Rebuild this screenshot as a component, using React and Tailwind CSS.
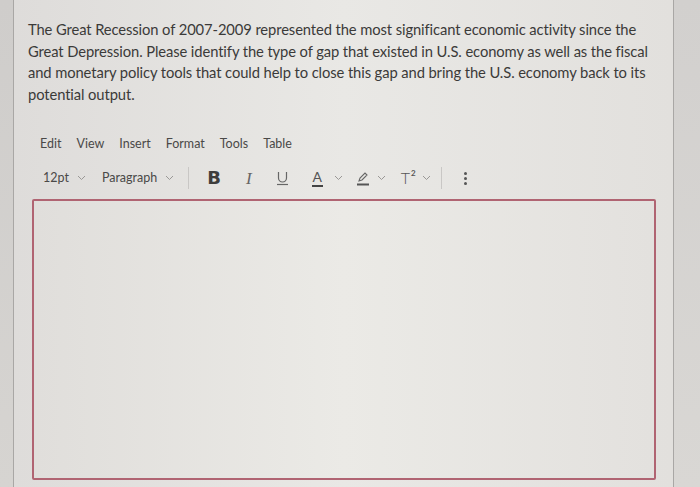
import React from 'react';

const MENU = ['Edit', 'View', 'Insert', 'Format', 'Tools', 'Table'];

function Chevron({ className = '' }) {
  return (
    <svg width="9" height="6" viewBox="0 0 9 6" className={className}>
      <path d="M1 1l3.5 3.5L8 1" fill="none" stroke="#9a9896" strokeWidth="1" />
    </svg>
  );
}

export default function App() {
  return (
    <div
      className="w-[700px] h-[487px] overflow-hidden flex bg-[#d9d7d5] text-[#3b3a39]"
      style={{ fontFamily: 'Lato, "Open Sans", sans-serif' }}
    >
      <div className="w-[13px] shrink-0 bg-gradient-to-b from-[#cfcdcb] to-[#d6d4d1]" />
      <div className="w-[661px] shrink-0 h-full border-l border-r border-[#a9a7a5] bg-gradient-to-r from-[#dedcda] via-[#e9e8e5] to-[#e2e0dd] flex flex-col">
        {/* Question */}
        <p className="pl-[14px] pr-4 pt-[19px] text-[14.75px] leading-[21.6px] tracking-[-0.1px]">
          The Great Recession of 2007-2009 represented the most significant economic activity since the
          Great Depression. Please identify the type of gap that existed in U.S. economy as well as the fiscal
          and monetary policy tools that could help to close this gap and bring the U.S. economy back to its
          potential output.
        </p>

        {/* Menu bar */}
        <div className="flex gap-[15px] pl-[26px] mt-[30px] text-[12.5px] text-[#4a4948]">
          {MENU.map(m => (
            <span key={m}>{m}</span>
          ))}
        </div>

        {/* Toolbar */}
        <div className="flex items-center pl-[29px] mt-[12px] h-[24px] text-[12.5px] text-[#4a4948]">
          <span>12pt</span>
          <Chevron className="ml-[8px]" />
          <span className="ml-[16px]">Paragraph</span>
          <Chevron className="ml-[8px]" />
          <span className="ml-[14px] w-px h-[22px] bg-[#c9c7c5]" />
          <span className="ml-[18px] text-[18px] font-bold text-[#3e3d3c] leading-none" style={{ fontFamily: '"DejaVu Sans", sans-serif' }}>B</span>
          <span className="ml-[25px] text-[17px] italic text-[#666] leading-none" style={{ fontFamily: '"Liberation Serif", serif' }}>I</span>
          <svg width="13" height="16" viewBox="0 0 13 16" className="ml-[24px]">
            <path d="M2.5 2v6a4 4 0 0 0 8 0V2" fill="none" stroke="#666" strokeWidth="1.2" />
            <path d="M1 14.5h11" stroke="#666" strokeWidth="1.2" />
          </svg>
          <span className="ml-[23px] flex flex-col items-center leading-none">
            <span className="text-[14px] text-[#555]">A</span>
            <span className="w-[11px] h-[2px] bg-[#444] mt-[1px]" />
          </span>
          <Chevron className="ml-[11px]" />
          <svg width="14" height="15" viewBox="0 0 14 15" className="ml-[13px]">
            <path d="M3 10l1-3 5-5 2 2-5 5-3 1z" fill="none" stroke="#666" strokeWidth="1.1" />
            <rect x="1" y="12.5" width="12" height="2" fill="#555" />
          </svg>
          <Chevron className="ml-[7px]" />
          <span className="ml-[15px] flex items-start leading-none text-[#555]">
            <span className="text-[16px] font-light">T</span>
            <span className="text-[8px] font-bold ml-[1px] -mt-[1px]">2</span>
          </span>
          <Chevron className="ml-[6px]" />
          <span className="ml-[10px] w-px h-[22px] bg-[#c9c7c5]" />
          <span className="ml-[22px] flex flex-col gap-[2px]">
            <span className="w-[3px] h-[3px] rounded-full bg-[#555]" />
            <span className="w-[3px] h-[3px] rounded-full bg-[#555]" />
            <span className="w-[3px] h-[3px] rounded-full bg-[#555]" />
          </span>
        </div>

        {/* Editor area */}
        <div className="ml-[18px] mt-[9px] w-[624px] h-[281px] border-2 border-[#b06472] rounded-[2px] bg-gradient-to-r from-[#e0dedb] via-[#ebeae6] to-[#e3e1de]" />
      </div>
      <div className="flex-1 bg-gradient-to-b from-[#d2d0ce] to-[#d9d7d4]" />
    </div>
  );
}
